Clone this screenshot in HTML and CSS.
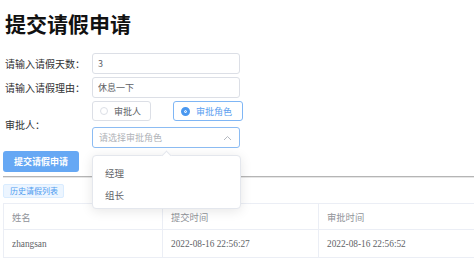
FILE: index.html
```html
<!DOCTYPE html>
<html lang="zh-CN">
<head>
    <meta charset="UTF-8">
    <title>提交请假申请</title>
    <link rel="stylesheet" href="styles.css">
</head>
<body>
    <div class="page">
        <h1 class="title">提交请假申请</h1>

        <div class="form">
            <div class="form-row">
                <label class="form-label">请输入请假天数：</label>
                <input class="text-input" type="text" value="3">
            </div>
            <div class="form-row">
                <label class="form-label">请输入请假理由：</label>
                <input class="text-input" type="text" value="休息一下">
            </div>
            <div class="form-row approver-row">
                <label class="form-label">审批人：</label>
                <div class="approver">
                    <div class="radio-group">
                        <div class="radio">
                            <span class="radio-dot"></span>审批人
                        </div>
                        <div class="radio checked">
                            <span class="radio-dot"></span>审批角色
                        </div>
                    </div>
                    <div class="select">
                        <span class="placeholder">请选择审批角色</span>
                        <svg class="chevron" width="9" height="6" viewBox="0 0 9 6">
                            <path d="M1 5 L4.5 1.5 L8 5" fill="none" stroke="#b4b8c0" stroke-width="1"/>
                        </svg>
                    </div>
                </div>
            </div>
            <button class="submit-btn">提交请假申请</button>
        </div>

        <hr class="divider">

        <span class="tag">历史请假列表</span>
        <table class="history">
            <thead>
                <tr>
                    <th>姓名</th>
                    <th>提交时间</th>
                    <th>审批时间</th>
                </tr>
            </thead>
            <tbody>
                <tr>
                    <td>zhangsan</td>
                    <td>2022-08-16 22:56:27</td>
                    <td>2022-08-16 22:56:52</td>
                </tr>
            </tbody>
        </table>

        <!-- open dropdown of the select -->
        <div class="dropdown">
            <span class="dropdown-arrow"></span>
            <div class="dropdown-item">经理</div>
            <div class="dropdown-item">组长</div>
        </div>
    </div>
</body>
</html>
```

FILE: styles.css
```css
body {
    margin: 0;
    background-color: #fff;
    font-family: "Liberation Serif", "Noto Sans CJK SC", serif;
    overflow: hidden;
}
.page {
    position: relative;
    padding: 9px 0 0 3px;
}
.title {
    margin: 0 0 16px 2px;
    font-family: "Noto Sans CJK SC", sans-serif;
    font-size: 21px;
    line-height: 28px;
    font-weight: bold;
    color: #111;
}
.form-row {
    display: flex;
    align-items: center;
    margin-bottom: 3px;
}
.form-label {
    width: 89px;
    padding-left: 2px;
    box-sizing: border-box;
    font-family: "Noto Sans CJK SC", sans-serif;
    font-size: 10px;
    color: #303133;
}
.text-input {
    width: 148px;
    height: 21px;
    box-sizing: border-box;
    margin: 0;
    padding: 0 5px;
    border: 1px solid #dcdfe6;
    border-radius: 3px;
    font-family: "Noto Sans CJK SC", sans-serif;
    font-size: 9px;
    color: #606266;
    outline: none;
}
.approver {
    display: flex;
    flex-direction: column;
    gap: 6px;
}
.radio-group {
    display: flex;
    gap: 22px;
}
.radio {
    display: flex;
    align-items: center;
    height: 20px;
    box-sizing: border-box;
    padding: 0 9px 0 7px;
    border: 1px solid #dcdfe6;
    border-radius: 3px;
    font-family: "Noto Sans CJK SC", sans-serif;
    font-size: 9px;
    color: #606266;
}
.radio-dot {
    width: 8px;
    height: 8px;
    margin-right: 6px;
    border: 1px solid #dcdfe6;
    border-radius: 50%;
    box-sizing: border-box;
}
.radio.checked {
    border-color: #7fb6f5;
    color: #5a9ef0;
    padding-right: 10px;
}
.radio.checked .radio-dot {
    background-color: #4a98f0;
    border: 3px solid #4a98f0;
    box-shadow: inset 0 0 0 1px #fff;
    width: 9px;
    height: 9px;
}
.select {
    display: flex;
    align-items: center;
    justify-content: space-between;
    width: 148px;
    height: 21px;
    box-sizing: border-box;
    padding: 0 7px 0 6px;
    border: 1px solid #8cbcf3;
    border-radius: 3px;
    font-family: "Noto Sans CJK SC", sans-serif;
    font-size: 9px;
}
.placeholder {
    color: #b0b3b8;
}
.submit-btn {
    display: block;
    width: 76px;
    height: 21px;
    margin-top: 2px;
    padding: 0;
    border: none;
    border-radius: 3px;
    background-color: #66a8f4;
    color: #fff;
    font-family: "Noto Sans CJK SC", sans-serif;
    font-size: 9px;
    font-weight: bold;
}
.divider {
    margin: 4px 0 6px 0;
    border: none;
    border-top: 1px solid #b5b5b5;
    border-bottom: 1px solid #e6e6e6;
}
.tag {
    display: inline-block;
    height: 14px;
    line-height: 13px;
    padding: 0 5px 0 6px;
    box-sizing: border-box;
    background-color: #ecf5ff;
    border: 1px solid #d9ecff;
    border-radius: 2px;
    font-size: 8px;
    color: #4f9cf0;
    vertical-align: top;
}
.history {
    width: 474px;
    margin-top: 1px;
    border-collapse: collapse;
    table-layout: fixed;
    font-size: 9.3px;
}
.history th, .history td {
    padding: 0 8px;
    text-align: left;
    border: 1px solid #ebeef5;
}
.history th {
    height: 25px;
    font-weight: normal;
    color: #909399;
}
.history td {
    height: 27px;
    color: #606266;
}
.history th:first-child, .history td:first-child {
    width: 142px;
}
.history th:nth-child(2), .history td:nth-child(2) {
    width: 139px;
}
.dropdown {
    position: absolute;
    left: 92px;
    top: 155px;
    width: 149px;
    height: 54px;
    box-sizing: border-box;
    padding-top: 6px;
    background-color: #fff;
    border: 1px solid #e4e7ed;
    border-radius: 4px;
    box-shadow: 0 2px 12px rgba(0, 0, 0, 0.1);
}
.dropdown-arrow {
    position: absolute;
    top: -4px;
    left: 70px;
    width: 6px;
    height: 6px;
    background-color: #fff;
    border-left: 1px solid #e4e7ed;
    border-top: 1px solid #e4e7ed;
    transform: rotate(45deg);
}
.dropdown-item {
    height: 22px;
    line-height: 22px;
    padding-left: 12px;
    font-family: "Noto Sans CJK SC", sans-serif;
    font-size: 9.5px;
    color: #606266;
}
```
